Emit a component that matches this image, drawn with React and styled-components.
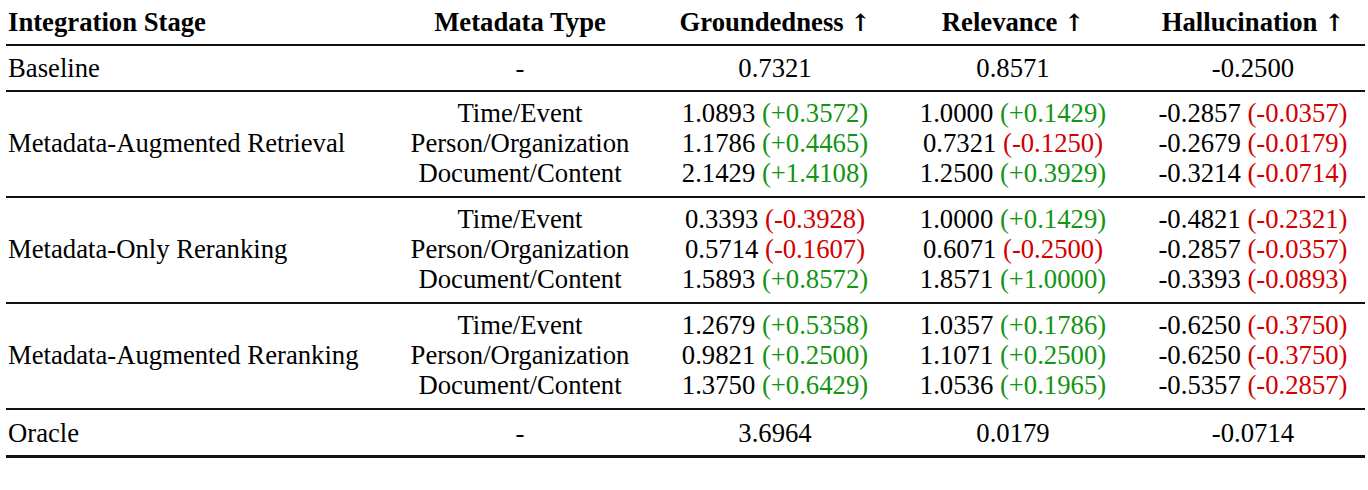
import React from "react";
import styled, { createGlobalStyle } from "styled-components";

const Global = createGlobalStyle`
  html, body { margin: 0; padding: 0; background: #fff; }
  body { font-family: "Liberation Serif", "Times New Roman", Tinos, "DejaVu Serif", serif; color: #000; }
`;

const COLS = "369px 290px 220px 256px 224px";

const Table = styled.div`
  width: 1359px;
  margin-left: 6px;
  font-family: "Liberation Serif", "Times New Roman", Tinos, "DejaVu Serif", serif;
  font-size: 26.7px;
`;

const Row = styled.div`
  display: grid;
  grid-template-columns: ${COLS};
  align-items: center;
  height: ${(p) => p.$h}px;
  font-weight: ${(p) => (p.$bold ? 700 : 400)};
`;

const Group = styled.div`
  display: grid;
  grid-template-columns: ${COLS};
  grid-auto-rows: 30px;
  align-items: center;
  padding: 6px 0 8px;
`;

const StageCell = styled.div`
  padding-left: 2px;
  white-space: nowrap;
  line-height: 30px;
  grid-row: ${(p) => p.$span || "auto"};
`;

const Cell = styled.div`
  text-align: center;
  white-space: nowrap;
  line-height: 30px;
`;

const Arrow = styled.span`
  font-family: "DejaVu Serif", "Liberation Serif", serif;
  font-weight: 700;
  font-size: 24px;
  color: #000;
`;

const Rule = styled.div`
  height: ${(p) => p.$w}px;
  background: #111;
`;

const Delta = styled.span`
  color: ${(p) => (p.$pos ? "#139413" : "#d20000")};
`;

const Value = ({ v, d }) => (
  <Cell>
    {v}
    {d && (
      <>
        {" "}
        <Delta $pos={d.startsWith("+")}>({d})</Delta>
      </>
    )}
  </Cell>
);

const Head = ({ children }) => (
  <Cell>
    {children} <Arrow>{"\u2191\uFE0E"}</Arrow>
  </Cell>
);

const groups = [
  {
    stage: "Metadata-Augmented Retrieval",
    rows: [
      ["Time/Event", ["1.0893", "+0.3572"], ["1.0000", "+0.1429"], ["-0.2857", "-0.0357"]],
      ["Person/Organization", ["1.1786", "+0.4465"], ["0.7321", "-0.1250"], ["-0.2679", "-0.0179"]],
      ["Document/Content", ["2.1429", "+1.4108"], ["1.2500", "+0.3929"], ["-0.3214", "-0.0714"]],
    ],
  },
  {
    stage: "Metadata-Only Reranking",
    rows: [
      ["Time/Event", ["0.3393", "-0.3928"], ["1.0000", "+0.1429"], ["-0.4821", "-0.2321"]],
      ["Person/Organization", ["0.5714", "-0.1607"], ["0.6071", "-0.2500"], ["-0.2857", "-0.0357"]],
      ["Document/Content", ["1.5893", "+0.8572"], ["1.8571", "+1.0000"], ["-0.3393", "-0.0893"]],
    ],
  },
  {
    stage: "Metadata-Augmented Reranking",
    rows: [
      ["Time/Event", ["1.2679", "+0.5358"], ["1.0357", "+0.1786"], ["-0.6250", "-0.3750"]],
      ["Person/Organization", ["0.9821", "+0.2500"], ["1.1071", "+0.2500"], ["-0.6250", "-0.3750"]],
      ["Document/Content", ["1.3750", "+0.6429"], ["1.0536", "+0.1965"], ["-0.5357", "-0.2857"]],
    ],
  },
];

export default function App() {
  return (
    <>
      <Global />
      <Table>
        <Row $h={44} $bold>
          <StageCell>Integration Stage</StageCell>
          <Cell>Metadata Type</Cell>
          <Head>Groundedness</Head>
          <Head>Relevance</Head>
          <Head>Hallucination</Head>
        </Row>
        <Rule $w={2} />
        <Row $h={44}>
          <StageCell>Baseline</StageCell>
          <Cell>-</Cell>
          <Value v="0.7321" />
          <Value v="0.8571" />
          <Value v="-0.2500" />
        </Row>
        {groups.map((g) => (
          <React.Fragment key={g.stage}>
            <Rule $w={2} />
            <Group>
              <StageCell $span="1 / span 3">{g.stage}</StageCell>
              {g.rows.map((r) => (
                <React.Fragment key={r[0]}>
                  <Cell>{r[0]}</Cell>
                  <Value v={r[1][0]} d={r[1][1]} />
                  <Value v={r[2][0]} d={r[2][1]} />
                  <Value v={r[3][0]} d={r[3][1]} />
                </React.Fragment>
              ))}
            </Group>
          </React.Fragment>
        ))}
        <Rule $w={2} />
        <Row $h={45}>
          <StageCell>Oracle</StageCell>
          <Cell>-</Cell>
          <Value v="3.6964" />
          <Value v="0.0179" />
          <Value v="-0.0714" />
        </Row>
        <Rule $w={3} />
      </Table>
    </>
  );
}
